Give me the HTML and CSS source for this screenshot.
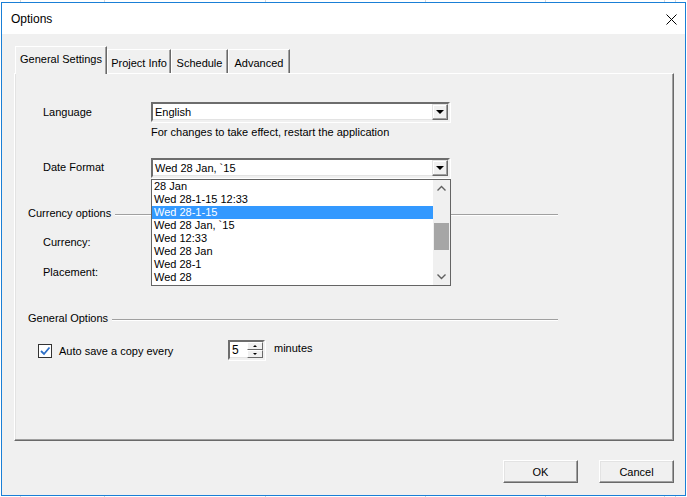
FILE: index.html
```html
<!DOCTYPE html>
<html lang="en">
  <head>
    <meta charset="UTF-8" />
    <title>Options</title>
    <link rel="stylesheet" href="styles.css">
  </head>
  <body>
    <div class="window">
      <div class="titlebar">
        <span class="title">Options</span>
        <svg class="close" width="11" height="11" viewBox="0 0 11 11">
          <path d="M0.5 0.5 L10.5 10.5 M10.5 0.5 L0.5 10.5" stroke="#000" stroke-width="1" fill="none" />
        </svg>
      </div>

      <div class="content">
        <!-- Tab strip -->
        <div class="tabs">
          <div class="tab active tab-general">General Settings</div>
          <div class="tab tab-project">Project Info</div>
          <div class="tab tab-schedule">Schedule</div>
          <div class="tab tab-advanced">Advanced</div>
        </div>

        <div class="panel">
          <div class="field">
            <span class="field-label">Language</span>
            <div class="combo">
              <span class="combo-text">English</span>
              <span class="combo-btn"><span class="arrow"></span></span>
            </div>
          </div>
          <div class="hint">For changes to take effect, restart the application</div>

          <div class="field field-date">
            <span class="field-label">Date Format</span>
            <div class="combo">
              <span class="combo-text">Wed 28 Jan, `15</span>
              <span class="combo-btn"><span class="arrow"></span></span>

              <!-- Open dropdown list -->
              <div class="dropdown">
                <ul class="items">
                  <li>28 Jan</li>
                  <li>Wed 28-1-15 12:33</li>
                  <li class="selected">Wed 28-1-15</li>
                  <li>Wed 28 Jan, `15</li>
                  <li>Wed 12:33</li>
                  <li>Wed 28 Jan</li>
                  <li>Wed 28-1</li>
                  <li>Wed 28</li>
                </ul>
                <div class="scrollbar">
                  <svg class="chev" width="17" height="17" viewBox="0 0 17 17">
                    <polyline points="4.5,10.5 8.5,6.5 12.5,10.5" stroke="#606060" stroke-width="1.4" fill="none" />
                  </svg>
                  <div class="track"><div class="thumb"></div></div>
                  <svg class="chev" width="17" height="17" viewBox="0 0 17 17">
                    <polyline points="4.5,6.5 8.5,10.5 12.5,6.5" stroke="#606060" stroke-width="1.4" fill="none" />
                  </svg>
                </div>
              </div>
            </div>
          </div>

          <div class="group group-currency">
            <span class="group-title">Currency options</span>
            <span class="group-line"></span>
          </div>
          <div class="plain-label currency">Currency:</div>
          <div class="plain-label placement">Placement:</div>

          <div class="group group-general">
            <span class="group-title">General Options</span>
            <span class="group-line"></span>
          </div>
          <div class="autosave">
            <span class="checkbox">
              <svg width="12" height="12" viewBox="0 0 12 12">
                <path d="M2 6 L5 9 L10.5 2.5" stroke="#2d6fc6" stroke-width="1.8" fill="none" />
              </svg>
            </span>
            <span class="autosave-label">Auto save a copy every</span>
            <div class="spinner">
              <span class="spin-value">5</span>
              <span class="spin-btns">
                <span class="spin-btn"><span class="tri-up"></span></span>
                <span class="spin-btn"><span class="tri-down"></span></span>
              </span>
            </div>
            <span class="minutes">minutes</span>
          </div>
        </div>

        <div class="footer">
          <button class="btn">OK</button>
          <button class="btn">Cancel</button>
        </div>
      </div>
    </div>
  </body>
</html>
```

FILE: styles.css
```css
* {
  box-sizing: border-box;
}

body {
  margin: 0;
  width: 687px;
  height: 497px;
  overflow: hidden;
  font-family: "Liberation Sans", Arial, sans-serif;
  font-size: 11px;
  color: #000;
  background-color: #fff;
  background-image:
    linear-gradient(#d6d6d6, #d6d6d6),
    linear-gradient(#d6d6d6, #d6d6d6),
    linear-gradient(#d6d6d6, #d6d6d6),
    linear-gradient(#d6d6d6, #d6d6d6),
    linear-gradient(#d6d6d6, #d6d6d6),
    linear-gradient(#d6d6d6, #d6d6d6),
    linear-gradient(#d6d6d6, #d6d6d6);
  background-size: 1px 100%;
  background-repeat: no-repeat;
  background-position: 20px 0, 104px 0, 265px 0, 425px 0, 545px 0, 664px 0, 675px 0;
}

.window {
  margin: 2px 0 0 1px;
  width: 685px;
  height: 494px;
  border: 1px solid #1a7fd6;
  background: #f0f0f0;
}

/* Title bar */
.titlebar {
  height: 31px;
  background: #fff;
  display: flex;
  align-items: center;
  padding: 0 8px 0 9px;
}

.title {
  font-size: 12px;
  padding-top: 1px;
}

.close {
  margin-left: auto;
  margin-top: 1px;
}

.content {
  padding: 12px 11px 0 12px;
}

/* Tabs */
.tabs {
  display: flex;
  align-items: flex-end;
  height: 27px;
  padding-left: 1px;
  position: relative;
  z-index: 2;
}

.tab {
  height: 24px;
  border: 1px solid;
  border-color: #fff #696969 transparent #fff;
  border-bottom: none;
  box-shadow: inset -1px 0 #a0a0a0;
  display: flex;
  align-items: center;
  justify-content: center;
  padding-top: 2px;
  background: #f0f0f0;
}

.tab.active {
  height: 28px;
  margin-bottom: -1px;
  padding-top: 0;
  padding-bottom: 3px;
}

.tab-general {
  width: 92px;
}

.tab-project {
  width: 64px;
}

.tab-schedule {
  width: 57px;
}

.tab-advanced {
  width: 62px;
}

.panel {
  position: relative;
  width: 660px;
  height: 368px;
  border: 1px solid;
  border-color: #fff #696969 #696969 #fff;
  box-shadow: inset -1px -1px #a0a0a0, inset 1px 0 #e3e3e3;
  padding: 28px 0 0 13px;
}

/* Fields */
.field {
  display: flex;
  align-items: center;
  padding-left: 15px;
  height: 20px;
}

.field-label {
  width: 108px;
}

.field-date .field-label {
  margin-top: -3px;
}

.field-date {
  margin-top: 19px;
}

.combo {
  position: relative;
  width: 299px;
  height: 20px;
  background: #fff;
  border: 2px solid;
  border-color: #6d6d6d #f0f0f0 #f0f0f0 #6d6d6d;
  box-shadow: inset -1px -1px #e3e3e3, 1px 1px #fff;
  display: flex;
  align-items: center;
}

.combo-text {
  flex: 1;
  padding-left: 2px;
}

.combo-btn {
  width: 16px;
  height: 16px;
  background: #f0f0f0;
  border: 1px solid;
  border-color: #e3e3e3 #696969 #696969 #e3e3e3;
  box-shadow: inset -1px -1px #a0a0a0, inset 1px 1px #fff;
  display: flex;
  align-items: center;
  justify-content: center;
}

.arrow {
  width: 0;
  height: 0;
  border-left: 4px solid transparent;
  border-right: 4px solid transparent;
  border-top: 4px solid #000;
}

.hint {
  margin: 4px 0 0 123px;
  line-height: 13px;
}

/* Dropdown list */
.dropdown {
  position: absolute;
  top: 19px;
  left: -2px;
  width: 300px;
  height: 107px;
  background: #fff;
  border: 1px solid #646464;
  display: flex;
  z-index: 5;
}

.items {
  list-style: none;
  margin: 0;
  padding: 0;
  flex: 1;
}

.items li {
  height: 13px;
  line-height: 13px;
  padding-left: 2px;
  white-space: nowrap;
}

.items li.selected {
  background: #3399ff;
  color: #fff;
}

.scrollbar {
  width: 17px;
  background: #f0f0f0;
  display: flex;
  flex-direction: column;
}

.chev {
  display: block;
  flex: none;
}

.track {
  flex: 1;
  position: relative;
}

.thumb {
  position: absolute;
  top: 26px;
  left: 1px;
  right: 1px;
  height: 27px;
  background: #a6a6a6;
}

/* Group boxes */
.group {
  display: flex;
  width: 530px;
  height: 14px;
  line-height: 14px;
  align-items: center;
}

.group-currency {
  margin-top: 28px;
}

.group-general {
  margin-top: 32px;
}

.group-line {
  flex: 1;
  margin-left: 4px;
  margin-top: 3px;
  height: 2px;
  border-top: 1px solid #a0a0a0;
  border-bottom: 1px solid #fff;
}

.plain-label {
  padding-left: 15px;
  line-height: 14px;
}

.currency {
  margin-top: 15px;
}

.placement {
  margin-top: 16px;
}

/* Auto save row */
.autosave {
  display: flex;
  align-items: center;
  height: 20px;
  margin-top: 15px;
  padding-left: 10px;
}

.checkbox {
  width: 14px;
  height: 14px;
  border: 1px solid #333;
  background: #fff;
  display: flex;
  align-items: center;
  justify-content: center;
  margin-top: 2px;
}

.autosave-label {
  width: 169px;
  margin-left: 7px;
  margin-top: 2px;
}

.spinner {
  width: 37px;
  height: 20px;
  background: #fff;
  border: 2px solid;
  border-color: #6d6d6d #f0f0f0 #f0f0f0 #6d6d6d;
  box-shadow: inset -1px -1px #e3e3e3, 1px 1px #fff;
  display: flex;
}

.spin-value {
  flex: 1;
  padding-left: 2px;
  line-height: 16px;
  font-size: 12px;
}

.spin-btns {
  width: 16px;
  display: flex;
  flex-direction: column;
}

.spin-btn {
  flex: 1;
  background: #f0f0f0;
  border: 1px solid;
  border-color: #fff #696969 #696969 #fff;
  display: flex;
  align-items: center;
  justify-content: center;
}

.tri-up,
.tri-down {
  width: 0;
  height: 0;
  border-left: 2px solid transparent;
  border-right: 2px solid transparent;
}

.tri-up {
  border-bottom: 2px solid #000;
}

.tri-down {
  border-top: 2px solid #000;
}

.minutes {
  margin-left: 9px;
  margin-top: -4px;
}

/* Footer buttons */
.footer {
  display: flex;
  justify-content: flex-end;
  gap: 21px;
  margin-top: 19px;
}

.btn {
  width: 75px;
  height: 23px;
  font-family: "Liberation Sans", Arial, sans-serif;
  font-size: 11px;
  color: #000;
  background: #f0f0f0;
  border: 1px solid;
  border-color: #fff #696969 #696969 #fff;
  box-shadow: inset -1px -1px #a0a0a0, inset 1px 1px #e3e3e3;
  padding: 0;
}
```
